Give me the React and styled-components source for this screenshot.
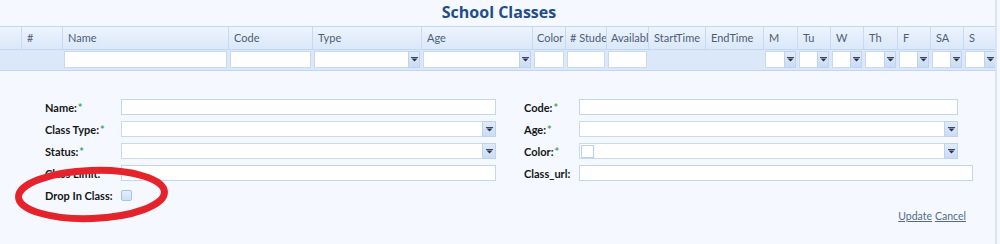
import React from "react";
import styled, { createGlobalStyle } from "styled-components";

const GlobalStyle = createGlobalStyle`
  html, body {
    margin: 0;
    padding: 0;
    background: #f5f9ff;
  }
  body {
    font-family: Lato, "Open Sans", Arial, sans-serif;
    font-size: 11px;
    color: #1c1c1c;
  }
`;

const cols = [21, 41, 166, 84, 109, 111, 33, 41, 42, 57, 58, 34, 33, 33, 34, 33, 33, 34];
const gridCols = cols.map((w) => `${w}px`).join(" ");

const columns = [
  { title: "", filter: "none" },
  { title: "#", filter: "none" },
  { title: "Name", filter: "text" },
  { title: "Code", filter: "text" },
  { title: "Type", filter: "combo" },
  { title: "Age", filter: "combo" },
  { title: "Color", filter: "text" },
  { title: "# Students", filter: "text" },
  { title: "Available", filter: "text" },
  { title: "StartTime", filter: "none" },
  { title: "EndTime", filter: "none" },
  { title: "M", filter: "combo" },
  { title: "Tu", filter: "combo" },
  { title: "W", filter: "combo" },
  { title: "Th", filter: "combo" },
  { title: "F", filter: "combo" },
  { title: "SA", filter: "combo" },
  { title: "S", filter: "combo" },
];

const Page = styled.div`
  position: relative;
  width: 997px;
  height: 244px;
  border-right: 2px solid #d8e5f6;
  box-sizing: border-box;
  overflow: hidden;
`;

const Title = styled.h1`
  margin: 0;
  height: 26px;
  line-height: 24px;
  text-align: center;
  font-family: "Open Sans", Lato, sans-serif;
  font-size: 16px;
  font-weight: 700;
  color: #1f4d8c;
  padding-left: 3px;
`;

const HeaderRow = styled.div`
  display: grid;
  grid-template-columns: ${gridCols};
  height: 22px;
  border-top: 1px solid #c4d7f0;
  border-bottom: 1px solid #c4d7f0;
  background: linear-gradient(#ecf3fd, #dbe8f9);
`;

const HeadCell = styled.div`
  border-left: ${(p) => (p.$first ? "none" : "1px solid #c9daf0")};
  padding-left: ${(p) => (p.$tight ? 4 : 5)}px;
  line-height: 22px;
  color: #4e5d76;
  white-space: nowrap;
  overflow: hidden;
`;

const FilterRow = styled.div`
  display: grid;
  grid-template-columns: ${gridCols};
  height: 20px;
  background: #dbe8fa;
  border-bottom: 1px solid #c4d6ef;
`;

const FilterCell = styled.div`
  padding: 1px 1px 0 2px;
  display: flex;
  min-width: 0;
`;

const FilterBox = styled.div`
  flex: 1;
  height: 17px;
  box-sizing: border-box;
  background: #fff;
  border: 1px solid #c8daf1;
  min-width: 0;
`;

const FilterCombo = styled.div`
  flex: 1;
  display: flex;
  height: 17px;
  min-width: 0;
`;

const ComboField = styled.div`
  flex: 1;
  position: relative;
  background: #fff;
  border: 1px solid #c8daf1;
  border-right: none;
  min-width: 0;
`;

const ComboArrow = styled.div`
  width: ${(p) => p.$w || 12}px;
  display: flex;
  align-items: center;
  justify-content: center;
  background: linear-gradient(#e0ebfa, #cadcf5);
  border: 1px solid #bfd3ef;
  box-sizing: border-box;
`;

const Arrow = () => (
  <svg width="7" height="5" viewBox="0 0 7 5">
    <rect x="0" y="0" width="7" height="1" fill="#3c4a5e" />
    <path d="M0.5 1.5 H6.5 L3.5 4.5 Z" fill="#2a3342" />
  </svg>
);

const Form = styled.div`
  display: grid;
  grid-template-columns: 76px 375px 28px 55px 394px;
  grid-auto-rows: 16px;
  row-gap: 6px;
  padding: 28px 0 0 45px;
  align-items: center;
`;

const Label = styled.div`
  font-weight: 700;
  color: #161616;
  white-space: nowrap;
  grid-column: ${(p) => (p.$right ? 4 : 1)};
`;

const Req = styled.span`
  color: #46a85c;
  font-weight: 700;
  margin-left: 1px;
`;

const TextBox = styled.div`
  grid-column: ${(p) => (p.$right ? 5 : 2)};
  width: ${(p) => p.$w}px;
  height: 16px;
  box-sizing: border-box;
  background: #fff;
  border: 1px solid #c3d6f0;
`;

const Combo = styled.div`
  grid-column: ${(p) => (p.$right ? 5 : 2)};
  width: ${(p) => p.$w}px;
  height: 16px;
  display: flex;
`;

const Swatch = styled.div`
  position: absolute;
  left: 1px;
  top: 1px;
  width: 11px;
  height: 11px;
  border: 1px solid #bcd1ee;
  background: #fff;
`;

const Spacer = styled.div`
  grid-column: 3;
`;

const Check = styled.div`
  grid-column: 2;
  width: 11px;
  height: 11px;
  box-sizing: border-box;
  border-radius: 2px;
  border: 1px solid #a8c3e8;
  background: linear-gradient(#e4eefc, #cfdff6);
`;

const Actions = styled.div`
  display: flex;
  justify-content: flex-end;
  gap: 3px;
  padding-right: 29px;
  margin-top: 6px;
  line-height: 14px;
  font-size: 10.5px;
`;

const LinkText = styled.a`
  color: #55698a;
  text-decoration: underline;
  cursor: pointer;
`;

const Mark = styled.svg`
  position: absolute;
  left: 10px;
  top: 160px;
  pointer-events: none;
`;

const FormCombo = ({ w, right, swatch }) => (
  <Combo $w={w} $right={right}>
    <ComboField>{swatch && <Swatch />}</ComboField>
    <ComboArrow $w={14}>
      <Arrow />
    </ComboArrow>
  </Combo>
);

export default function App() {
  return (
    <>
      <GlobalStyle />
      <Page>
        <Title>School Classes</Title>
        <HeaderRow>
          {columns.map((c, i) => (
            <HeadCell key={i} $first={i === 0} $tight={i >= 6 && i <= 8}>
              {c.title}
            </HeadCell>
          ))}
        </HeaderRow>
        <FilterRow>
          {columns.map((c, i) => (
            <FilterCell key={i}>
              {c.filter === "text" && <FilterBox />}
              {c.filter === "combo" && (
                <FilterCombo>
                  <ComboField />
                  <ComboArrow>
                    <Arrow />
                  </ComboArrow>
                </FilterCombo>
              )}
            </FilterCell>
          ))}
        </FilterRow>

        <Form>
          <Label>Name:<Req>*</Req></Label>
          <TextBox $w={375} />
          <Spacer />
          <Label $right>Code:<Req>*</Req></Label>
          <TextBox $right $w={379} />

          <Label>Class Type:<Req>*</Req></Label>
          <FormCombo w={375} />
          <Spacer />
          <Label $right>Age:<Req>*</Req></Label>
          <FormCombo right w={379} />

          <Label>Status:<Req>*</Req></Label>
          <FormCombo w={375} />
          <Spacer />
          <Label $right>Color:<Req>*</Req></Label>
          <FormCombo right w={379} swatch />

          <Label>Class Limit:</Label>
          <TextBox $w={375} />
          <Spacer />
          <Label $right>Class_url:</Label>
          <TextBox $right $w={394} />

          <Label>Drop In Class:</Label>
          <Check />
        </Form>

        <Actions>
          <LinkText>Update</LinkText>
          <LinkText>Cancel</LinkText>
        </Actions>

        <Mark width="165" height="70" viewBox="0 0 165 70">
          <ellipse
            cx="81.5"
            cy="34.5"
            rx="73"
            ry="24"
            fill="none"
            stroke="#e4232b"
            strokeWidth="7"
            transform="rotate(-2 81.5 34.5)"
          />
        </Mark>
      </Page>
    </>
  );
}
